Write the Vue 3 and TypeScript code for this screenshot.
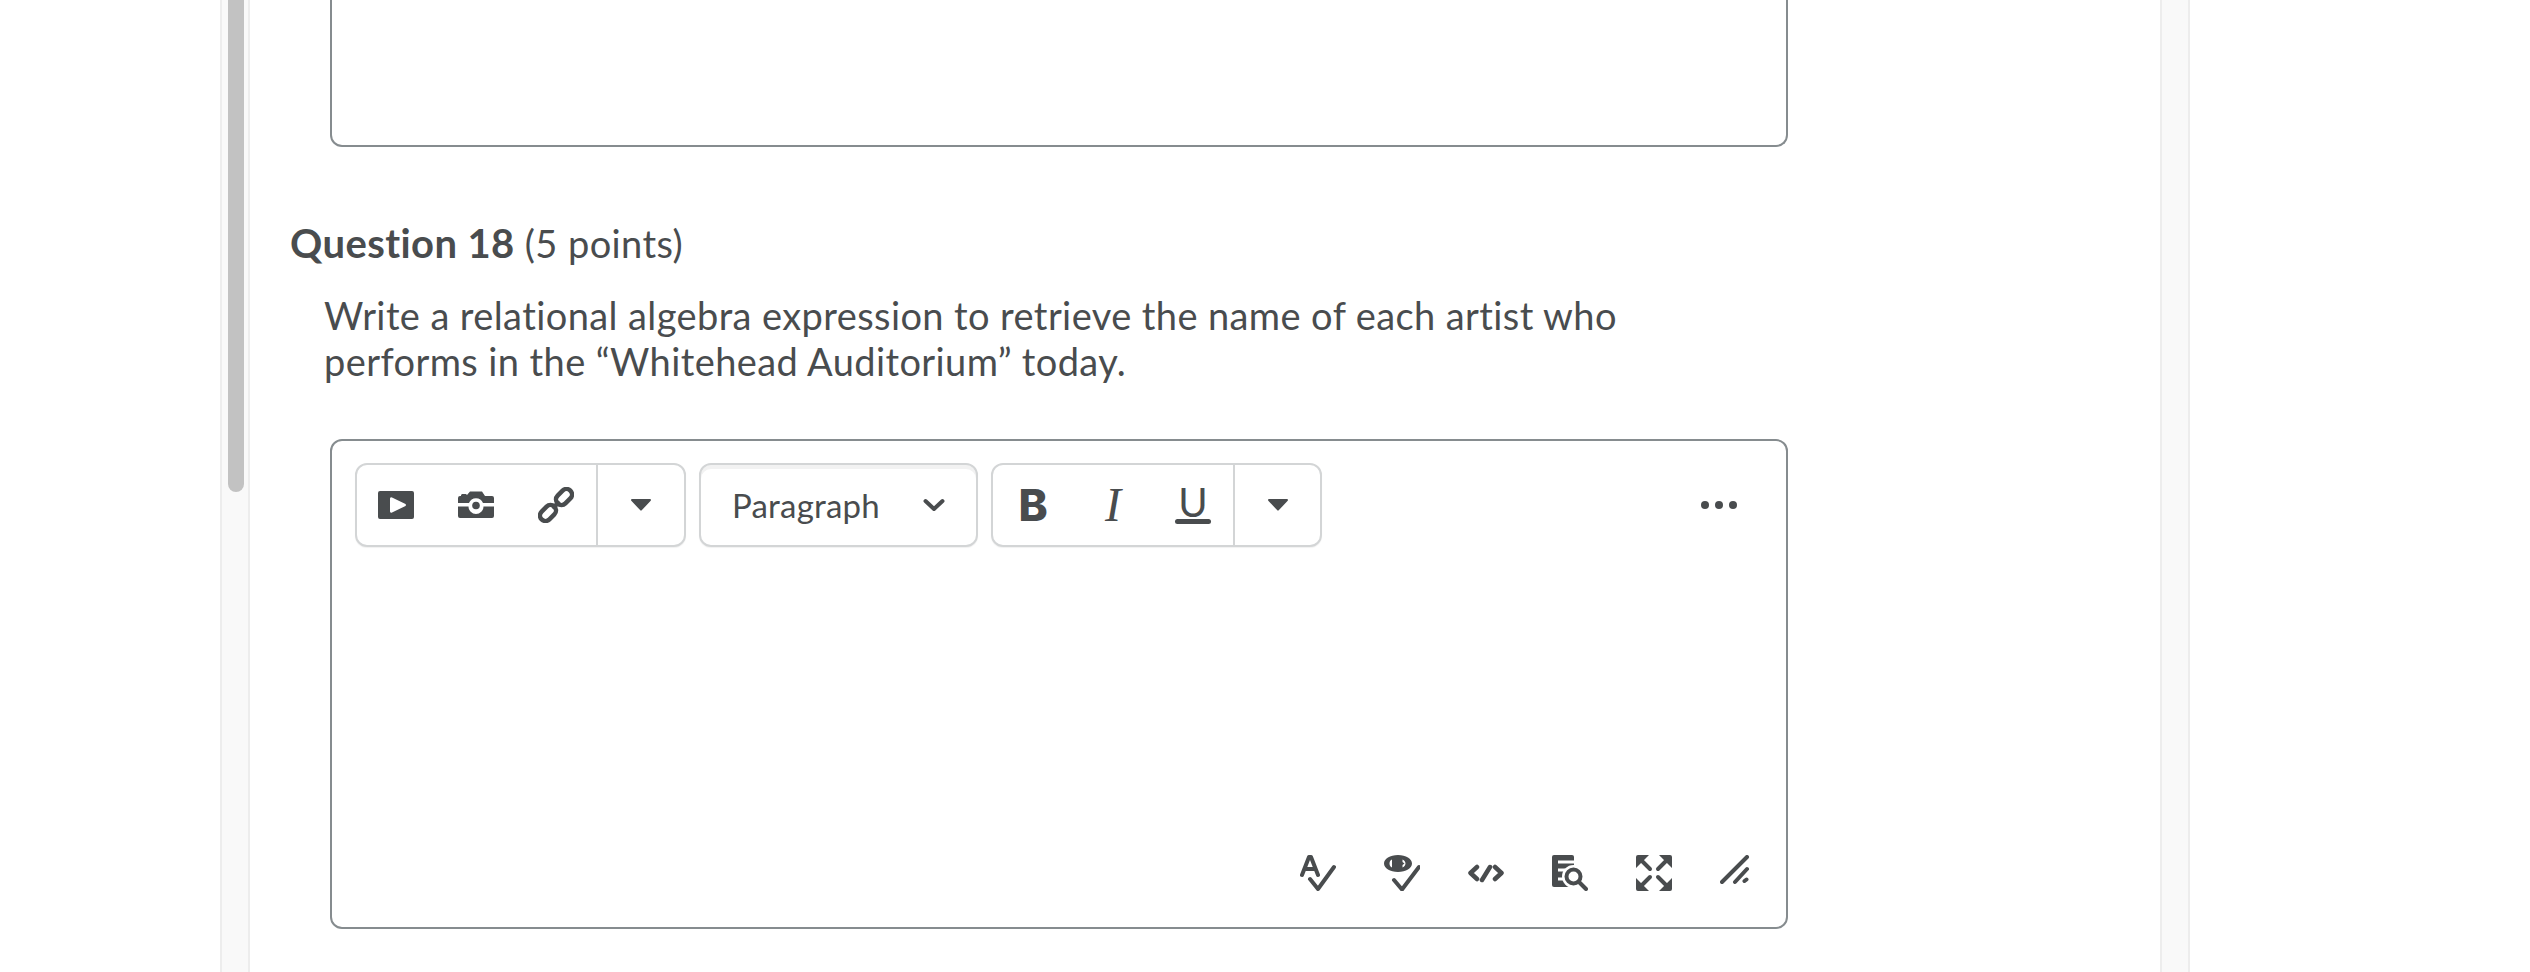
<script setup lang="ts">
const bottomIcons = ['spell', 'preview', 'code', 'find', 'full'];
</script>

<template>
  <div class="page">
    <div class="rail"><div class="thumb"></div></div>
    <main class="content">
      <div class="prev-box"></div>
      <h2 class="q-title"><strong>Question 18</strong> <span>(5 points)</span></h2>
      <p class="q-text">Write a relational algebra expression to retrieve the name of each artist who<br />performs in the “Whitehead Auditorium” today.</p>
      <section class="editor">
        <div class="toolbar">
          <div class="group g1">
            <button class="tb first">
              <svg width="36" height="36" viewBox="0 0 36 36"><path fill-rule="evenodd" d="M2 4h32a2 2 0 0 1 2 2v24a2 2 0 0 1-2 2H2a2 2 0 0 1-2-2V6a2 2 0 0 1 2-2zm12 6.500a1.500 1.500 0 0 0-2 1v13a1.500 1.500 0 0 0 2 1l13.500-6.500a1.500 1.500 0 0 0 0-2z" fill="#494c4e"/></svg>
            </button>
            <button class="tb">
              <svg width="36" height="36" viewBox="0 0 36 36"><path fill-rule="evenodd" d="M0 19.500h10.500a7.500 7.500 0 0 0 15 0H36V29a2 2 0 0 1-2 2H2a2 2 0 0 1-2-2zM0 16v-5a2 2 0 0 1 2-2h1V8l1-1h4l1 1 3-3.500h12L27 9h7a2 2 0 0 1 2 2v5H25a7.500 7.500 0 0 0-14 0z" fill="#494c4e"/><circle cx="18" cy="18.500" r="3.800" fill="#494c4e"/></svg>
            </button>
            <button class="tb">
              <svg width="36" height="36" viewBox="0 0 36 36" fill="none" stroke="#494c4e" stroke-width="4.500" stroke-linecap="round"><rect x="-9" y="-5.500" width="18" height="11" rx="5.500" transform="translate(26 10) rotate(-45)"/><rect x="-9" y="-5.500" width="18" height="11" rx="5.500" transform="translate(10 26) rotate(-45)"/><path d="M16 20l4-4"/></svg>
            </button>
            <span class="divider"></span>
            <button class="caret-btn"><svg width="20" height="12" viewBox="0 0 20 12"><path d="M1 0h18a1 1 0 0 1 .7 1.700l-9 9.600a1 1 0 0 1-1.400 0L.3 1.700A1 1 0 0 1 1 0z" fill="#494c4e"/></svg></button>
          </div>
          <div class="group select">
            <span class="sel-label">Paragraph</span>
            <svg width="22" height="14" viewBox="0 0 22 14" fill="none" stroke="#494c4e" stroke-width="4" stroke-linecap="round" stroke-linejoin="round"><path d="M2.500 3L11 11l8.500-8"/></svg>
          </div>
          <div class="group g3">
            <button class="tb letter bold">B</button>
            <button class="tb letter ital">I</button>
            <button class="tb under"><span class="u-wrap"><span class="u-letter">U</span><span class="u-bar"></span></span></button>
            <span class="divider"></span>
            <button class="caret-btn"><svg width="20" height="12" viewBox="0 0 20 12"><path d="M1 0h18a1 1 0 0 1 .7 1.700l-9 9.600a1 1 0 0 1-1.400 0L.3 1.700A1 1 0 0 1 1 0z" fill="#494c4e"/></svg></button>
          </div>
          <button class="more"><i></i><i></i><i></i></button>
        </div>
        <div class="foot">
          <span v-for="n in bottomIcons" :key="n" class="foot-icon">
            <svg v-if="n === 'spell'" width="36" height="36" viewBox="0 0 36 36" fill="none" stroke="#494c4e" stroke-width="4" stroke-linecap="round" stroke-linejoin="round"><path d="M2 20L9 2h2l7 18M5 14h10M10 24l8 10L34 12"/></svg>
            <svg v-else-if="n === 'preview'" width="36" height="36" viewBox="0 0 36 36"><path fill-rule="evenodd" d="M14 0c8 0 14 4 14 8.500S22 17 14 17 0 13 0 8.500 6 0 14 0zM8 4.500C6 5.500 5.500 7 5.500 8.500s.5 3 2.500 4zM18.500 5v2l2 1.500-2 1.500v2.500c2-1 3-2.500 3-4s-1-3-3-4z" fill="#494c4e"/><path d="M10 25l8 9.500L35 12" fill="none" stroke="#494c4e" stroke-width="4" stroke-linecap="round" stroke-linejoin="round"/></svg>
            <svg v-else-if="n === 'code'" width="36" height="36" viewBox="0 0 36 36" fill="none" stroke="#494c4e" stroke-width="4.500" stroke-linecap="round" stroke-linejoin="round"><path d="M9 12l-6.500 6L9 24M27 12l6.500 6L27 24M22 12l-8 13"/></svg>
            <svg v-else-if="n === 'find'" width="36" height="36" viewBox="0 0 36 36"><rect x="0" y="0" width="22" height="32" rx="2" fill="#494c4e"/><g stroke="#fff" stroke-width="3" fill="none"><path d="M6 7h16M6 15h7M6 24h7"/></g><circle cx="21.500" cy="21.500" r="11.500" fill="#fff"/><g fill="none" stroke="#494c4e" stroke-width="4" stroke-linecap="round"><circle cx="21.500" cy="21.500" r="7"/><path d="M27 27l7 7"/></g></svg>
            <svg v-else width="36" height="36" viewBox="0 0 36 36"><g fill="#494c4e"><path d="M2 0h11L0 13V2a2 2 0 0 1 2-2zM34 0H23l13 13V2a2 2 0 0 0-2-2zM2 36h11L0 23v11a2 2 0 0 0 2 2zM34 36H23l13-13v11a2 2 0 0 1-2 2z"/></g><g stroke="#494c4e" stroke-width="4" stroke-linecap="round"><path d="M5 5l9 9M31 5l-9 9M5 31l9-9M31 31l-9-9"/></g></svg>
          </span>
          <span class="resize">
            <svg width="30" height="30" viewBox="0 0 30 30" fill="none" stroke="#494c4e" stroke-width="4" stroke-linecap="round"><path d="M2 27L27 2M15 27L27 14M24.500 26l2-1.500"/></svg>
          </span>
        </div>
      </section>
    </main>
    <div class="rail right"></div>
  </div>
</template>

<style>
html, body { margin: 0; background: #fff; overflow: hidden; }
</style>

<style scoped>
.page {
  display: flex;
  width: 2530px;
  height: 972px;
  padding-left: 220px;
  box-sizing: border-box;
  font-family: Lato, "Open Sans", sans-serif;
  font-variant-ligatures: none;
  color: #494c4e;
  overflow: hidden;
}
.rail {
  flex: none;
  width: 30px;
  height: 972px;
  box-sizing: border-box;
  background: #f9f9f9;
  border-left: 2px solid #ededed;
  border-right: 2px solid #ededed;
  padding-left: 6px;
}
.thumb {
  width: 16px;
  height: 492px;
  background: #c2c2c2;
  border-radius: 0 0 8px 8px;
}
.content {
  flex: none;
  width: 1910px;
  box-sizing: border-box;
  padding-left: 40px;
}
.prev-box {
  box-sizing: border-box;
  margin-left: 40px;
  width: 1458px;
  height: 147px;
  border: 2px solid #868c8f;
  border-top: 0;
  border-radius: 0 0 12px 12px;
}
.q-title {
  margin: 71px 0 0;
  font-size: 38px;
  line-height: 50px;
  font-weight: 400;
  letter-spacing: 0.4px;
}
.q-title strong { font-weight: 700; font-size: 40px; }
.q-text {
  margin: 24px 0 0 34px;
  font-size: 38px;
  line-height: 46px;
  letter-spacing: 0.4px;
}
.editor {
  box-sizing: border-box;
  margin: 55px 0 0 40px;
  width: 1458px;
  height: 490px;
  border: 2px solid #868c8f;
  border-radius: 12px;
  display: flex;
  flex-direction: column;
  justify-content: space-between;
  padding: 22px 22px 36px 23px;
}
.toolbar { display: flex; align-items: stretch; gap: 13px; height: 84px; }
.group {
  box-sizing: border-box;
  display: flex;
  align-items: center;
  height: 84px;
  background: #fff;
  border: 2px solid #d3d5d6;
  border-radius: 12px;
  box-shadow: 0 1px 1px rgba(0, 0, 0, 0.06);
}
.g1, .g3 { width: 331px; }
.select {
  width: 279px;
  padding: 0 31px 0 31px;
  justify-content: space-between;
  box-shadow: inset 0 4px 0 #f2f2f2, 0 1px 1px rgba(0, 0, 0, 0.06);
}
.sel-label { font-size: 33px; line-height: 40px; letter-spacing: 0.2px; }
button {
  appearance: none;
  border: 0;
  background: none;
  padding: 0;
  color: inherit;
  font-family: inherit;
  display: flex;
  align-items: center;
  justify-content: center;
}
.tb { width: 80px; height: 78px; flex: none; }
.g1 .tb.first { margin-left: -1px; }
.divider { width: 2px; align-self: stretch; background: #d3d5d6; }
.caret-btn { flex: 1; height: 100%; }
.letter { font-size: 44px; line-height: 1; }
.bold { font-family: Inter, sans-serif; font-weight: 800; }
.ital { font-family: "Liberation Serif", serif; font-style: italic; font-size: 48px; }
.u-wrap { display: flex; flex-direction: column; align-items: center; width: 36px; gap: 2px; }
.u-letter { font-size: 40px; line-height: 30px; }
.u-bar { width: 36px; height: 5px; border-radius: 3px; background: #494c4e; }
.more { margin-left: auto; margin-right: 27px; align-self: center; gap: 6px; }
.more i { width: 8px; height: 8px; border-radius: 50%; background: #494c4e; }
.foot { display: flex; justify-content: flex-end; align-items: flex-start; gap: 48px; padding-right: 14px; }
.foot-icon { display: flex; width: 36px; height: 36px; }
.resize { display: flex; width: 30px; height: 30px; }
</style>
